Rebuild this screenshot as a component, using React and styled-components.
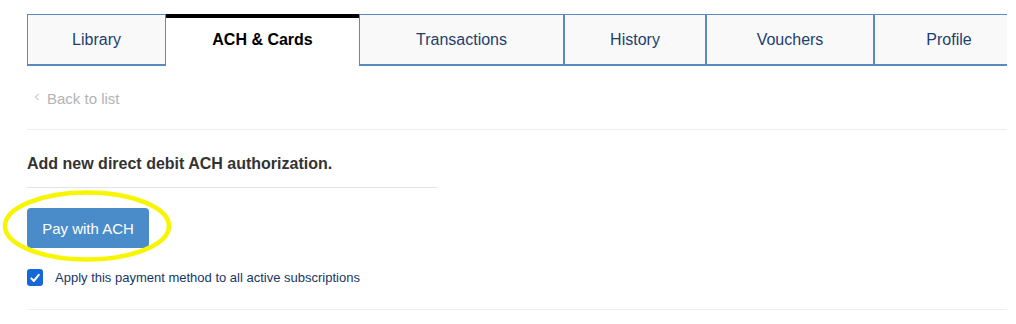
import React from "react";
import styled, { createGlobalStyle } from "styled-components";

const Global = createGlobalStyle`
  html, body { margin: 0; padding: 0; background: #fff; }
  body { font-family: "Liberation Sans", Arial, sans-serif; }
  * { box-sizing: border-box; }
`;

const Page = styled.div`
  width: 1016px;
  height: 324px;
  padding: 14px 9px 0 27px;
  overflow: hidden;
`;

const TabBar = styled.nav`
  display: flex;
  width: 980px;
  height: 52px;
  overflow: hidden;
`;

const Tab = styled.div`
  flex: 0 0 ${(p) => p.$w}px;
  display: flex;
  align-items: center;
  justify-content: center;
  font-size: 16px;
  height: 52px;
  ${(p) =>
    p.$active
      ? `
    background: #fff;
    border-top: 4px solid #000;
    color: #000;
    font-weight: bold;
    padding-bottom: 5px;
  `
      : `
    background: #f9f9f9;
    border: 1px solid #5a8ac0;
    border-width: 1px 1px 2px 1px;
    color: #1d3f6e;
    padding-top: 1px;
  `}
`;

const BackRow = styled.div`
  display: flex;
  align-items: center;
  gap: 7px;
  height: 64px;
  padding-left: 7px;
  padding-top: 1px;
  border-bottom: 1px solid #eeeeee;
  color: #b3b3b3;
  font-size: 15px;
  width: 980px;
`;

const Chevron = styled.svg`
  width: 6px;
  height: 8px;
  margin-top: -3px;
`;

const Heading = styled.h3`
  margin: 0;
  width: 410px;
  padding: 25px 0 14px;
  font-size: 16px;
  font-weight: bold;
  color: #333;
  border-bottom: 1px solid #e3e3e3;
`;

const ButtonWrap = styled.div`
  position: relative;
  display: inline-block;
  margin-top: 20px;
`;

const PrimaryButton = styled.button`
  display: block;
  width: 122px;
  height: 40px;
  border: none;
  border-radius: 4px;
  background: #4a8bca;
  color: #fff;
  font-family: "Liberation Sans", Arial, sans-serif;
  font-size: 15px;
  padding: 0;
`;

const Highlight = styled.svg`
  position: absolute;
  left: -25px;
  top: -18px;
  width: 172px;
  height: 76px;
  pointer-events: none;
  overflow: visible;
`;

const CheckRow = styled.label`
  display: flex;
  align-items: center;
  gap: 12px;
  margin-top: 21px;
  padding-bottom: 23px;
  width: 980px;
  border-bottom: 1px solid #eeeeee;
  color: #163766;
  font-size: 13px;
`;

const Box = styled.span`
  width: 16px;
  height: 17px;
  border-radius: 3px;
  background: #1667d8;
  display: flex;
  align-items: center;
  justify-content: center;
  flex: 0 0 auto;
`;

const tabs = [
  ["Library", 139],
  ["ACH & Cards", 193, true],
  ["Transactions", 205],
  ["History", 142],
  ["Vouchers", 168],
  ["Profile", 150],
];

export default function App() {
  return (
    <>
      <Global />
      <Page>
        <TabBar>
          {tabs.map(([t, w, a]) => (
            <Tab key={t} $w={w} $active={a}>
              {t}
            </Tab>
          ))}
        </TabBar>
        <BackRow>
          <Chevron viewBox="0 0 6 8">
            <path d="M4.5 0.8 L1.5 4 L4.5 7.2" fill="none" stroke="#b3b3b3" strokeWidth="1" />
          </Chevron>
          Back to list
        </BackRow>
        <Heading>Add new direct debit ACH authorization.</Heading>
        <ButtonWrap>
          <PrimaryButton>Pay with ACH</PrimaryButton>
          <Highlight viewBox="0 0 172 76">
            <ellipse cx="85" cy="36" rx="82" ry="33.5" fill="none" stroke="#f7f500" strokeWidth="4.5" />
          </Highlight>
        </ButtonWrap>
        <CheckRow>
          <Box>
            <svg width="12" height="12" viewBox="0 0 12 12">
              <path d="M2.3 6.4 L4.8 9 L9.8 2.8" fill="none" stroke="#fff" strokeWidth="2" strokeLinecap="round" strokeLinejoin="round" />
            </svg>
          </Box>
          Apply this payment method to all active subscriptions
        </CheckRow>
      </Page>
    </>
  );
}
